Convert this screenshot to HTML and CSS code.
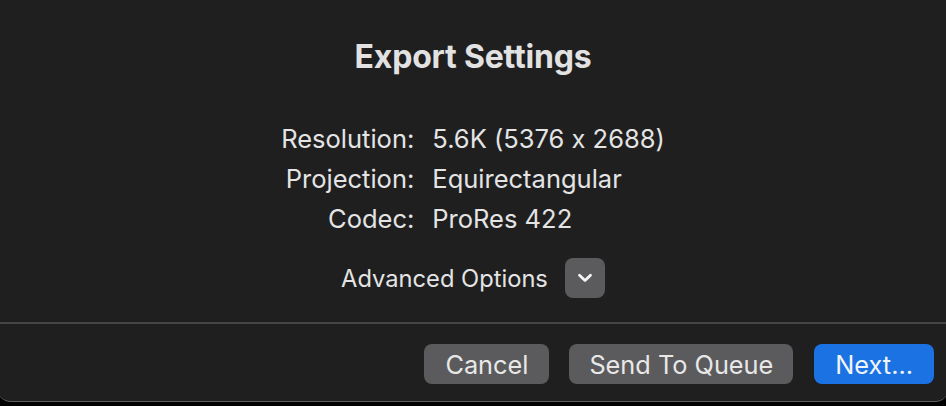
FILE: index.html
```html
<!DOCTYPE html>
<html>
<head>
<meta charset="utf-8">
<link rel="stylesheet" href="styles.css">
</head>
<body>
<div class="window">
  <div class="main">
    <h1 class="title">Export Settings</h1>
    <div class="info">
      <div class="label">Resolution:</div><div class="value">5.6K (5376 x 2688)</div>
      <div class="label">Projection:</div><div class="value">Equirectangular</div>
      <div class="label">Codec:</div><div class="value">ProRes 422</div>
    </div>
    <div class="advanced">
      <span class="adv-label">Advanced Options</span>
      <button class="disclosure" aria-label="Show advanced options">
        <svg width="18" height="12" viewBox="0 0 18 12"><path d="M3.5 3.2 L9 8.4 L14.5 3.2" fill="none" stroke="#f4f4f4" stroke-width="2.8" stroke-linecap="round" stroke-linejoin="round"/></svg>
      </button>
    </div>
  </div>
  <div class="footer">
    <button class="btn btn-cancel">Cancel</button>
    <button class="btn">Send To Queue</button>
    <button class="btn btn-primary">Next...</button>
  </div>
</div>
</body>
</html>
```

FILE: styles.css
```css
html, body {
  margin: 0;
  padding: 0;
  background: #000;
  width: 946px;
  height: 406px;
  overflow: hidden;
}
.window {
  width: 952px;
  margin-left: -3px;
  height: 402px;
  box-sizing: border-box;
  background: #1f1f20;
  border-bottom: 1px solid #5e5e60;
  border-radius: 0 0 14px 14px;
  display: flex;
  flex-direction: column;
  font-family: Inter, "Liberation Sans", sans-serif;
  font-feature-settings: "calt" 0;
  color: #e4e4e4;
}
.main {
  height: 322px;
  display: flex;
  flex-direction: column;
  align-items: center;
  padding-top: 39px;
  box-sizing: border-box;
}
.title {
  margin: 0;
  font-size: 32px;
  line-height: 36px;
  font-weight: 700;
  color: #e2e2e2;
  letter-spacing: -0.2px;
}
.info {
  margin-top: 44px;
  display: grid;
  grid-template-columns: auto auto;
  column-gap: 18px;
  font-size: 25.5px;
  line-height: 40px;
}
.label { text-align: right; }
.value { text-align: left; }
.advanced {
  margin-top: 19px;
  display: flex;
  align-items: center;
  gap: 17px;
  font-size: 23.7px;
  height: 40px;
}
.disclosure {
  width: 40px;
  height: 40px;
  border: none;
  border-radius: 8px;
  background: #5b5b5d;
  display: flex;
  align-items: center;
  justify-content: center;
  padding: 0;
}
.footer {
  flex: 1;
  border-top: 2px solid #454547;
  display: flex;
  justify-content: flex-end;
  align-items: flex-start;
  gap: 20px;
  padding: 20px 15px 0 0;
}
.btn {
  height: 40px;
  border: none;
  border-radius: 8px;
  background: #5b5b5d;
  color: #e8e8e8;
  font-family: Inter, "Liberation Sans", sans-serif;
  font-feature-settings: "calt" 0;
  font-size: 25.3px;
  padding: 0 20px;
}
.btn-cancel { padding: 0 21px; }
.btn-primary {
  background: #1b72e2;
  color: #f0f4fb;
  padding: 0 21px;
}
.btn-primary + .btn, .btn + .btn-primary { margin-left: 1px; }
```
